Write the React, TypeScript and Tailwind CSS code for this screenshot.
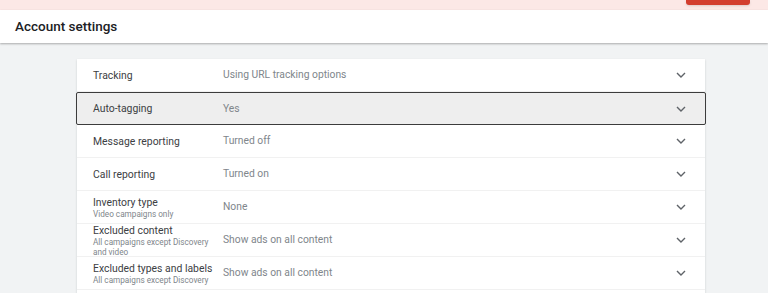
import React from "react";

type Row = { label: string; sub?: string; value: string; active?: boolean };

const ROWS: Row[] = [
  { label: "Tracking", value: "Using URL tracking options" },
  { label: "Auto-tagging", value: "Yes", active: true },
  { label: "Message reporting", value: "Turned off" },
  { label: "Call reporting", value: "Turned on" },
  { label: "Inventory type", sub: "Video campaigns only", value: "None" },
  { label: "Excluded content", sub: "All campaigns except Discovery and video", value: "Show ads on all content" },
  { label: "Excluded types and labels", sub: "All campaigns except Discovery", value: "Show ads on all content" },
  { label: "", value: "" },
];

function Chevron() {
  return (
    <svg width="10" height="6" viewBox="0 0 10 6" className="text-[#5f6368]">
      <path d="M1 1l4 4 4-4" fill="none" stroke="currentColor" strokeWidth="1.4" />
    </svg>
  );
}

export default function App() {
  return (
    <div className="h-[293px] overflow-hidden bg-[#f1f3f4] font-['Roboto',sans-serif]">
      {/* alert strip */}
      <div className="h-[10px] bg-[#fce8e6] flex justify-end pr-[18px]">
        <div className="w-[64px] h-[5px] bg-[#d33d2e] rounded-b-[3px] shadow-sm" />
      </div>

      {/* HEADER */}
      <div className="h-[33px] bg-white flex items-center px-[15px] shadow-[0_1px_2px_rgba(0,0,0,0.3)] relative">
        <h1 className="text-[13.5px] font-medium text-[#202124]">Account settings</h1>
      </div>

      {/* CARD */}
      <div className="ml-[77px] w-[628px] mt-[16px] bg-white shadow-[0_1px_2px_rgba(60,64,67,0.2)]">
        {ROWS.map((r, i) => (
          <div
            key={i}
            className={
              r.active
                ? "h-[33px] flex items-center pl-[16px] pr-[19px] bg-[#eeeeee] border border-[#3c3c3c] rounded-[2px] -mx-px"
                : "h-[33px] flex items-center pl-[16px] pr-[19px] border-b border-[#f1f1f1]"
            }
          >
            <div className="w-[130px] shrink-0 leading-none">
              <div className="text-[10.4px] text-[#3c4043] leading-[13px]">{r.label}</div>
              {r.sub && (
                <div className="text-[8.2px] text-[#80868b] leading-[10px] pr-[10px]">{r.sub}</div>
              )}
            </div>
            <div className="flex-1 text-[10.3px] text-[#80868b]">{r.value}</div>
            {r.label && <Chevron />}
          </div>
        ))}
      </div>
    </div>
  );
}
